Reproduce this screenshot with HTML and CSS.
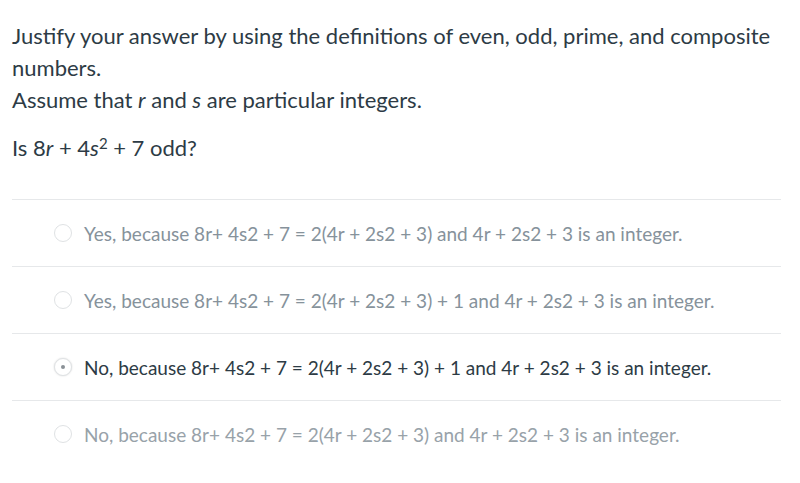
FILE: index.html
```html
<!DOCTYPE html>
<html>
<head>
<meta charset="utf-8">
<link rel="stylesheet" href="styles.css">
</head>
<body>
<div class="question">
  <div class="prompt">
    <p class="intro">Justify your answer by using the definitions of even, odd, prime, and composite numbers.<br>Assume that <i>r</i> and <i>s</i> are particular integers.</p>
    <p class="ask">Is 8<i>r</i> + 4<i>s</i><sup>2</sup> + 7 odd?</p>
  </div>
  <div class="answers">
    <label class="answer">
      <span class="radio"></span>
      <span class="text">Yes, because 8r+ 4s2 + 7 = 2(4r + 2s2 + 3) and 4r + 2s2 + 3 is an integer.</span>
    </label>
    <label class="answer">
      <span class="radio"></span>
      <span class="text">Yes, because 8r+ 4s2 + 7 = 2(4r + 2s2 + 3) + 1 and 4r + 2s2 + 3 is an integer.</span>
    </label>
    <label class="answer selected">
      <span class="radio"></span>
      <span class="text">No, because 8r+ 4s2 + 7 = 2(4r + 2s2 + 3) + 1 and 4r + 2s2 + 3 is an integer.</span>
    </label>
    <label class="answer faint">
      <span class="radio"></span>
      <span class="text">No, because 8r+ 4s2 + 7 = 2(4r + 2s2 + 3) and 4r + 2s2 + 3 is an integer.</span>
    </label>
  </div>
</div>
</body>
</html>
```
FILE: styles.css
```css
html, body {
  margin: 0;
  padding: 0;
  background: #ffffff;
}
body {
  font-family: Lato, "Open Sans", sans-serif;
  color: #2d3b45;
}
.question {
  padding: 20px 19px 0 12px;
}
.prompt p {
  margin: 0;
  font-size: 22px;
  line-height: 32px;
}
.prompt .ask {
  margin-top: 16px;
}
.prompt sup {
  font-size: 15px;
  line-height: 0;
  vertical-align: 0.5em;
}
.answers {
  margin-top: 35px;
  border-top: 1px solid #e6e8ea;
}
.answer {
  display: flex;
  align-items: center;
  gap: 12px;
  height: 66px;
  padding-left: 42px;
  border-bottom: 1px solid #e6e8ea;
  font-size: 19px;
  color: #86929b;
}
.answer.faint {
  color: #98a2a9;
  border-bottom: none;
}
.answer.selected {
  color: #2d3b45;
}
.radio {
  position: relative;
  flex: none;
  width: 16px;
  height: 16px;
  border: 1px solid #dfe2e4;
  border-radius: 50%;
  background: #fff;
}
.selected .radio {
  box-shadow: 0 0 2px rgba(0,0,0,0.15);
}
.selected .radio::after {
  content: "";
  position: absolute;
  left: 6px;
  top: 6px;
  width: 4px;
  height: 4px;
  border-radius: 50%;
  background: #8a9096;
}
```
